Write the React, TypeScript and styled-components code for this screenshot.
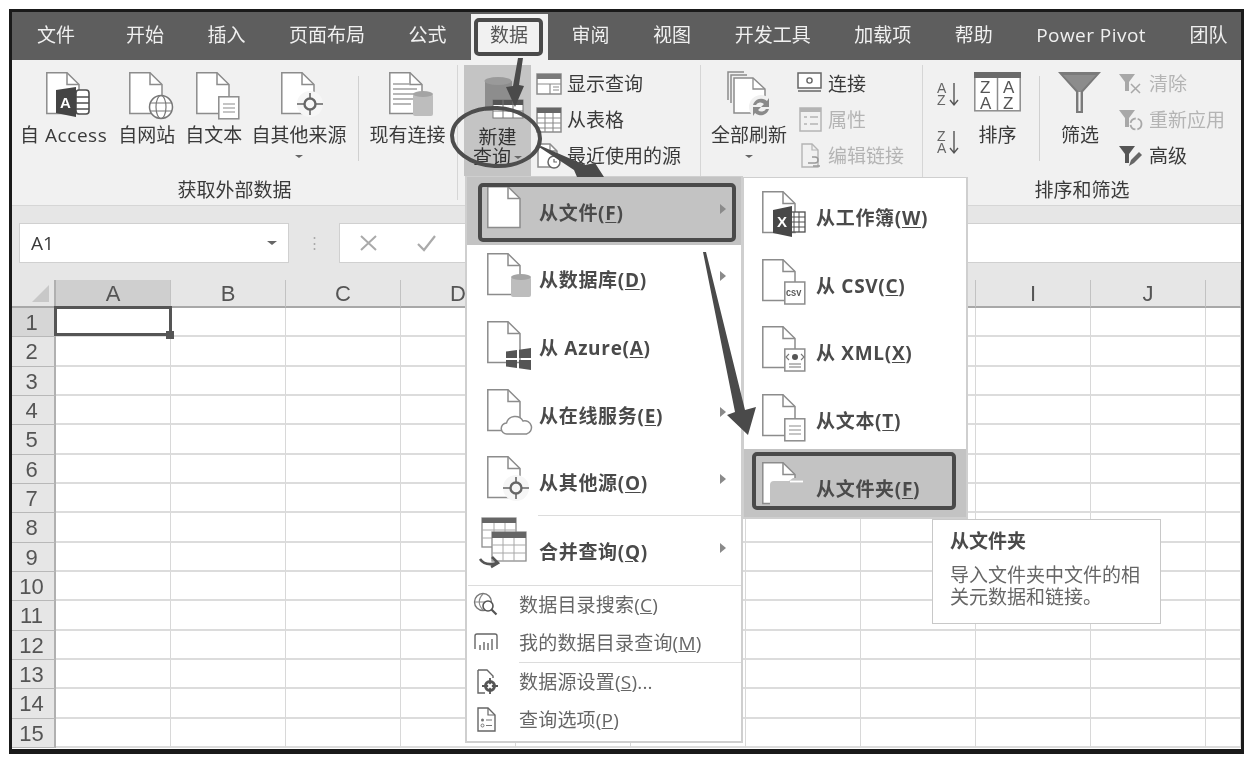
import React from "react";
import styled, { createGlobalStyle } from "styled-components";

const LINE = "#8c8c8c";
const DARK = "#4f4f4f";
const MUTED = "#b4b4b4";

const GlobalStyle = createGlobalStyle`
  html, body { margin: 0; background: #fff; }
  #root { padding: 9px; }
  svg { display: block; overflow: visible; flex-shrink: 0; }
`;

const Frame = styled.div`
  position: relative;
  width: 1229px;
  height: 737px;
  border: 3px solid #1a1a1a;
  border-bottom-width: 5px;
  overflow: hidden;
  display: flex;
  flex-direction: column;
  background: #fff;
  color: #3a3a3a;
  font: 19px/24px "Open Sans", "Noto Sans CJK SC", sans-serif;
  filter: blur(0.45px);
`;

const TabBar = styled.div`
  height: 48px;
  flex-shrink: 0;
  display: flex;
  gap: 43.5px;
  padding-left: 25px;
  background: #5e5e5e;
  color: #f0f0f0;
  white-space: nowrap;
`;

const Tab = styled.div<{ $active?: boolean; $file?: boolean; $latin?: boolean }>`
  position: relative;
  z-index: 0;
  display: flex;
  align-items: center;
  padding-bottom: 2px;
  margin-right: ${(p) => (p.$file ? 7.5 : 0)}px;
  letter-spacing: ${(p) => (p.$latin ? 0.45 : 0)}px;
  color: ${(p) => (p.$active ? "#555" : "inherit")};
  ${(p) =>
    p.$active &&
    `
    &::before {
      content: "";
      position: absolute;
      z-index: -1;
      left: -19px;
      right: -20px;
      top: 2px;
      bottom: 0;
      background: #f1f1f1;
    }
    &::after {
      content: "";
      position: absolute;
      left: -16px;
      right: -15px;
      top: 6px;
      height: 30px;
      border: 4px solid #4a4a4a;
      border-radius: 5px;
    }
  `}
`;

const Ribbon = styled.div`
  height: 145px;
  flex-shrink: 0;
  box-sizing: border-box;
  padding-top: 5px;
  display: flex;
  background: #f1f1f1;
`;

const Group = styled.div<{ $width?: number; $grow?: boolean }>`
  box-sizing: border-box;
  width: ${(p) => (p.$width ? `${p.$width}px` : "auto")};
  flex-grow: ${(p) => (p.$grow ? 1 : 0)};
  height: 135px;
  display: flex;
  flex-direction: column;
  border-right: ${(p) => (p.$grow ? "none" : "1px solid #d6d6d6")};
`;

const GroupBody = styled.div<{ $left: number }>`
  height: 115px;
  display: flex;
  padding-left: ${(p) => p.$left}px;
`;

const GroupLabel = styled.div`
  height: 20px;
  line-height: 20px;
  text-align: center;
  white-space: nowrap;
`;

const BigButton = styled.div<{ $gap?: number; $width?: number; $nudge?: number }>`
  width: ${(p) => (p.$width ? `${p.$width}px` : "auto")};
  margin-left: ${(p) => p.$gap ?? 0}px;
  padding-top: 7px;
  display: flex;
  flex-direction: column;
  align-items: center;
  white-space: nowrap;
  & > svg {
    margin-left: ${(p) => p.$nudge ?? 0}px;
  }
`;

const BigLabel = styled.div<{ $top?: number; $wide?: boolean }>`
  margin-top: ${(p) => p.$top ?? 5}px;
  letter-spacing: ${(p) => (p.$wide ? 0.55 : 0)}px;
`;

const Caret = styled.span<{ $margin?: number; $size?: number }>`
  display: block;
  margin-top: ${(p) => p.$margin ?? 8}px;
  width: 0;
  height: 0;
  border-left: ${(p) => p.$size ?? 4}px solid transparent;
  border-right: ${(p) => p.$size ?? 4}px solid transparent;
  border-top: ${(p) => (p.$size ?? 4) - 0.5}px solid #666;
`;

const InlineCaret = styled(Caret)`
  display: inline-block;
  margin: 0 0 2px 3px;
  vertical-align: middle;
`;

const Divider = styled.div<{ $gap: number }>`
  width: 1px;
  height: 85px;
  margin: 11px 10px 0 ${(p) => p.$gap}px;
  background: #d0d0d0;
`;

const NewQuery = styled.div`
  width: 67px;
  height: 111px;
  box-sizing: border-box;
  padding-top: 12px;
  background: #c4c4c4;
  display: flex;
  flex-direction: column;
  align-items: center;
  line-height: 20px;
  color: #333;
  white-space: nowrap;
`;

const NewQueryText = styled.div`
  margin-top: 9px;
  text-align: center;
`;

const SmallColumn = styled.div<{ $gap: number }>`
  margin-left: ${(p) => p.$gap}px;
  padding-top: 1px;
  display: flex;
  flex-direction: column;
`;

const SmallRow = styled.div<{ $muted?: boolean }>`
  height: 36px;
  display: flex;
  align-items: center;
  gap: 5px;
  white-space: nowrap;
  color: ${(p) => (p.$muted ? MUTED : "inherit")};
`;

const SortColumn = styled.div`
  width: 22px;
  padding-top: 17px;
  display: flex;
  flex-direction: column;
  gap: 24px;
`;

const FormulaBar = styled.div`
  height: 75px;
  flex-shrink: 0;
  box-sizing: border-box;
  padding: 17px 0 17px 7px;
  display: flex;
  background: #e6e6e6;
  border-top: 1px solid #d6d6d6;
`;

const NameBox = styled.div`
  width: 270px;
  box-sizing: border-box;
  padding: 0 11px;
  display: flex;
  align-items: center;
  justify-content: space-between;
  background: #fff;
  border: 1px solid #d0d0d0;
  font: 19px "Open Sans", sans-serif;
`;

const GripDots = styled.div`
  width: 50px;
  text-align: center;
  line-height: 38px;
  font-size: 15px;
  color: #aaa;
`;

const FormulaInput = styled.div`
  flex: 1;
  display: flex;
  gap: 37px;
  align-items: center;
  padding-left: 19px;
  background: #fff;
  border: 1px solid #d0d0d0;
  border-right: none;
`;

const Sheet = styled.div`
  flex: 1;
  min-height: 0;
  display: grid;
  grid-template-columns: 44px repeat(10, 115px) 1fr;
  grid-template-rows: 28px repeat(15, 29.33px);
  font: 22px/29px "Liberation Sans", sans-serif;
  color: #555;
`;

const HeadCell = styled.div<{ $active?: boolean }>`
  background: ${(p) => (p.$active ? "#cfcfcf" : "#e6e6e6")};
  border-right: 1px solid #c2c2c2;
  border-bottom: 2px solid #a8a8a8;
  text-align: center;
  line-height: 28px;
`;

const Corner = styled.div`
  background: #e6e6e6;
  border-bottom: 2px solid #a8a8a8;
  border-right: 2px solid #b0b0b0;
  display: flex;
  align-items: flex-end;
  justify-content: flex-end;
  padding: 0 5px 4px 0;
`;

const RowHead = styled.div<{ $active?: boolean }>`
  background: ${(p) => (p.$active ? "#d6d6d6" : "#e6e6e6")};
  border-right: 2px solid #b0b0b0;
  border-bottom: 1px solid #b8b8b8;
  padding-right: 3px;
  text-align: center;
`;

const Cell = styled.div`
  position: relative;
  border-right: 1px solid #d8d8d8;
  border-bottom: 2px solid #dcdcdc;
`;

const Selection = styled.div`
  position: absolute;
  z-index: 1;
  left: -2px;
  top: -2px;
  right: -2px;
  bottom: -1px;
  border: 3px solid #555;
  &::after {
    content: "";
    position: absolute;
    right: -5px;
    bottom: -6px;
    width: 8px;
    height: 8px;
    background: #555;
  }
`;

const Menu = styled.div`
  position: absolute;
  left: 453px;
  top: 164px;
  width: 274px;
  height: 564px;
  background: #fff;
  border: 2px solid #cfcfcf;
  border-top-width: 1px;
  display: flex;
  flex-direction: column;
`;

const Item = styled.div<{ $active?: boolean; $height?: number }>`
  position: relative;
  height: ${(p) => p.$height ?? 67.6}px;
  flex-shrink: 0;
  box-sizing: border-box;
  padding: 0 0 4px 20px;
  display: flex;
  align-items: center;
  gap: 6px;
  background: ${(p) => (p.$active ? "#c3c3c3" : "transparent")};
  white-space: nowrap;
  ${(p) =>
    p.$active &&
    `
    &::after {
      content: "";
      position: absolute;
      inset: 6px 5px 3px 11px;
      border: 4px solid #4a4a4a;
      border-radius: 5px;
    }
  `}
`;

const ItemLabel = styled.span`
  margin-top: 8px;
  font-weight: 700;
  color: #4a4a4a;
  font-size: 19px;
  letter-spacing: 0.7px;
  u {
    text-underline-offset: 2px;
  }
`;

const Chevron = styled.span`
  margin: 0 15px 0 auto;
  width: 0;
  height: 0;
  border-top: 5px solid transparent;
  border-bottom: 5px solid transparent;
  border-left: 6px solid #8a8a8a;
`;

const Rule = styled.div<{ $inset: number }>`
  height: 1px;
  flex-shrink: 0;
  margin-left: ${(p) => p.$inset}px;
  background: #dcdcdc;
`;

const PlainItem = styled.div`
  height: 38px;
  flex-shrink: 0;
  padding-left: 6px;
  display: flex;
  align-items: center;
  gap: 20px;
  color: #666;
  white-space: nowrap;
  letter-spacing: 0.2px;
`;

const SubMenu = styled.div`
  position: absolute;
  left: 730px;
  top: 165px;
  width: 222px;
  height: 339px;
  background: #fff;
  border: 2px solid #cfcfcf;
  border-top-width: 1px;
  display: flex;
  flex-direction: column;
`;

const SubItem = styled(Item)`
  height: 67.8px;
  padding: 4px 0 0 18px;
  gap: 8px;
  &::after {
    inset: 3px 10px 7px 8px;
  }
`;

const Tooltip = styled.div`
  position: absolute;
  left: 920px;
  top: 507px;
  width: 229px;
  height: 105px;
  box-sizing: border-box;
  padding: 10px 12px 0 17px;
  background: #fff;
  border: 1px solid #c8c8c8;
  color: #666;
  line-height: 22px;
`;

const TooltipTitle = styled.div`
  font-weight: 700;
  color: #4a4a4a;
  margin-bottom: 12px;
`;

const Marks = styled.svg`
  position: absolute;
  left: -12px;
  top: -12px;
  pointer-events: none;
`;

/* --- icons --- */

const Doc = ({ fill = "#fff", stroke = LINE, x = 0, y = 0 }: { fill?: string; stroke?: string; x?: number; y?: number }) => (
  <g transform={`translate(${x} ${y})`} fill={fill} stroke={stroke} strokeWidth="1.5">
    <path d="M.8.8H21L33 12.5V41.5H.8Z" />
    <path d="M21 .8V12.5H33" fill="none" />
  </g>
);

const Big = ({ children }: { children: React.ReactNode }) => (
  <svg width="46" height="46" viewBox="0 0 46 46">
    {children}
  </svg>
);

const Small = ({ children }: { children: React.ReactNode }) => (
  <svg width="26" height="26" viewBox="0 0 26 26">
    {children}
  </svg>
);

const Cylinder = ({ x, y, w, h, fill = "#bdbdbd" }: { x: number; y: number; w: number; h: number; fill?: string }) => (
  <g>
    <rect x={x} y={y + 3} width={w} height={h - 3} rx="2" fill={fill} />
    <ellipse cx={x + w / 2} cy={y + 3} rx={w / 2} ry="3" fill="#a4a4a4" />
  </g>
);

const Target = ({ cx, cy }: { cx: number; cy: number }) => (
  <g stroke="#666" fill="none">
    <circle cx={cx} cy={cy} r="5.5" strokeWidth="2.4" />
    <path d={`M${cx - 13} ${cy}h7M${cx + 6} ${cy}h7M${cx} ${cy - 11}v5M${cx} ${cy + 6}v5`} strokeWidth="1.6" />
  </g>
);

const NotePage = ({ x, y }: { x: number; y: number }) => (
  <g transform={`translate(${x} ${y})`}>
    <rect x=".8" y=".8" width="20" height="22" fill="#fff" stroke={LINE} strokeWidth="1.5" />
    <path d="M5 8h12M5 12h12M5 16h12" stroke={LINE} strokeWidth="1.2" />
  </g>
);

const AccessIcon = () => (
  <Big>
    <Doc />
    <rect x="30" y="18" width="13" height="24" rx="3" fill="#fff" stroke={DARK} strokeWidth="1.6" />
    <path d="M30 25h13M30 31h13M30 37h13" stroke={DARK} strokeWidth="1.4" />
    <path d="M10 18 30 15V45L10 41Z" fill="#444" />
    <text x="14" y="36" fontSize="15" fontWeight="700" fill="#fff" fontFamily="Liberation Sans">A</text>
  </Big>
);

const WebIcon = () => (
  <Big>
    <Doc />
    <circle cx="32" cy="35" r="11.5" fill="#fff" stroke="#777" strokeWidth="1.5" />
    <ellipse cx="32" cy="35" rx="5" ry="11.5" fill="none" stroke="#777" strokeWidth="1.2" />
    <path d="M21 31h22M21 39h22" stroke="#777" strokeWidth="1.2" />
  </Big>
);

const TextIcon = () => (
  <Big>
    <Doc />
    <NotePage x={22} y={24} />
  </Big>
);

const OtherIcon = () => (
  <Big>
    <Doc />
    <circle cx="29" cy="32" r="13" fill="#f6f6f6" stroke="none" />
    <Target cx={29} cy={32} />
  </Big>
);

const ExistingIcon = () => (
  <Big>
    <Doc />
    <path d="M4 12h16M4 17h24M4 22h24M4 27h20M4 32h18" stroke="#a0a0a0" strokeWidth="1.3" />
    <Cylinder x={24} y={19} w={20} h={25} />
  </Big>
);

const NewQueryIcon = () => (
  <svg width="56" height="41" viewBox="0 0 56 41">
    <path d="M15 4v30h27V4Z" fill="#8d8d8d" />
    <ellipse cx="28" cy="4" rx="13.5" ry="4" fill="#9a9a9a" />
    <rect x="23" y="23" width="30" height="18" fill="#fff" stroke="#777" />
    <path d="M23 23h30v5H23Z" fill="#555" />
    <path d="M33 23v18M43 23v18M23 34h30" stroke="#777" />
  </svg>
);

const ShowIcon = () => (
  <Small>
    <rect x="1" y="3" width="24" height="20" fill="#fff" stroke={LINE} strokeWidth="1.5" />
    <path d="M1 3h24v5H1Z" fill="#7a7a7a" />
    <path d="M1 13h24M14 13v10M17 16h6M17 19h6" stroke={LINE} strokeWidth="1.2" />
  </Small>
);

const TableIcon = () => (
  <Small>
    <rect x="1" y="1" width="24" height="24" fill="#fff" stroke={LINE} strokeWidth="1.5" />
    <path d="M1 1h24v5H1Z" fill="#666" />
    <path d="M1 11h24M1 16h24M1 21h24M9 6v19M17 6v19" stroke={LINE} strokeWidth="1.1" />
  </Small>
);

const RecentIcon = () => (
  <Small>
    <path d="M2 1H14L21 8V24H2Z" fill="#fff" stroke={LINE} strokeWidth="1.5" />
    <path d="M14 1V8H21" fill="none" stroke={LINE} strokeWidth="1.3" />
    <circle cx="18" cy="19" r="6" fill="#fff" stroke="#666" strokeWidth="1.5" />
    <path d="M18 16v3h3" fill="none" stroke="#666" strokeWidth="1.2" />
  </Small>
);

const RefreshIcon = () => (
  <svg width="46" height="46" viewBox="0 0 46 46">
    <path d="M0 28V0H16M3 31V3H19" fill="none" stroke={LINE} strokeWidth="1.5" />
    <path d="M6 34V6H25L37 17V41H6Z" fill="#fff" stroke={LINE} strokeWidth="1.5" />
    <path d="M25 6V17H37" fill="none" stroke={LINE} strokeWidth="1.3" />
    <circle cx="33" cy="35" r="12" fill="#f1f1f1" />
    <path d="M25 33a8.5 8.5 0 0 1 14-4l2-3v9h-8l3-3a5 5 0 0 0-8 1ZM41 37a8.5 8.5 0 0 1-14 4l-2 3v-9h8l-3 3a5 5 0 0 0 8-1Z" fill="#8a8a8a" />
  </svg>
);

const LinkIcon = () => (
  <Small>
    <rect x="1" y="2" width="23" height="15" fill="#fff" stroke="#666" strokeWidth="1.5" />
    <circle cx="12.5" cy="9.5" r="2.6" fill="none" stroke="#666" strokeWidth="1.4" />
    <path d="M1 20h23" stroke="#666" strokeWidth="1.5" />
  </Small>
);

const PropsIcon = () => (
  <Small>
    <rect x="3" y="1" width="21" height="23" fill="none" stroke={MUTED} strokeWidth="1.5" />
    <path d="M3 1h21v4H3Z" fill={MUTED} />
    <path d="M7 10h3M7 17h3M13 10h8M13 17h8" stroke={MUTED} strokeWidth="1.5" />
  </Small>
);

const EditLinkIcon = () => (
  <Small>
    <path d="M5 1H15L21 7V24H5Z" fill="none" stroke={MUTED} strokeWidth="1.4" />
    <path d="M15 1V7H21" fill="none" stroke={MUTED} strokeWidth="1.2" />
    <path d="M11 20h7a3 3 0 0 0 0-6h-3M16 23h7" fill="none" stroke="#999" strokeWidth="1.5" />
  </Small>
);

const SortGlyph = ({ top, bottom }: { top: string; bottom: string }) => (
  <svg width="22" height="24" viewBox="0 0 22 24">
    <text x="0" y="11" fontSize="14" fill="#666" fontFamily="Liberation Sans">{top}</text>
    <text x="0" y="23" fontSize="14" fill="#666" fontFamily="Liberation Sans">{bottom}</text>
    <path d="M17 1v21M13 18l4 5 4-5" fill="none" stroke="#555" strokeWidth="1.4" />
  </svg>
);

const SortBoxIcon = () => (
  <svg width="47" height="40" viewBox="0 0 47 40" fontFamily="Liberation Sans" fontSize="17" fill="#555">
    <rect x=".8" y=".8" width="45.4" height="38" fill="#fff" stroke={LINE} strokeWidth="1.5" />
    <path d="M0 0h47v6H0Z" fill="#6a6a6a" />
    <path d="M23.5 6v33" stroke={LINE} strokeWidth="1.5" />
    <text x="6" y="21">Z</text>
    <text x="6" y="37">A</text>
    <text x="29" y="21">A</text>
    <text x="29" y="37">Z</text>
  </svg>
);

const FunnelIcon = () => (
  <Big>
    <path d="M1 0H44L26 20V41H19V20Z" fill="#7a7a7a" />
    <path d="M6 3H39L24 19V39H21V19Z" fill="#8c8c8c" />
    <path d="M21.5 20V39h2V20Z" fill="#f1f1f1" />
  </Big>
);

const MiniFunnel = ({ fill }: { fill: string }) => <path d="M1 3H17L11 11V20H7V11Z" fill={fill} />;

const ClearIcon = () => (
  <Small>
    <MiniFunnel fill="#a8a8a8" />
    <path d="M13 13l9 9M22 13l-9 9" stroke="#a8a8a8" strokeWidth="1.5" />
  </Small>
);

const ReapplyIcon = () => (
  <Small>
    <MiniFunnel fill="#a8a8a8" />
    <circle cx="18" cy="17" r="5.5" fill="none" stroke="#a8a8a8" strokeWidth="1.8" strokeDasharray="7 2" />
  </Small>
);

const AdvancedIcon = () => (
  <Small>
    <MiniFunnel fill="#555" />
    <path d="M11 23l2-6 8-8 3 3-8 8Z" fill="#666" />
  </Small>
);

const SheetIcon = () => (
  <Big>
    <Doc />
  </Big>
);

const DatabaseIcon = () => (
  <Big>
    <Doc />
    <Cylinder x={24} y={21} w={20} h={23} />
  </Big>
);

const AzureIcon = () => (
  <Big>
    <Doc />
    <path d="M19 30.5 30 29V37H19ZM32 28.7 44 27V37H32ZM19 39H30V47L19 45.5ZM32 39H44V49L32 47.3Z" fill="#555" />
  </Big>
);

const CloudIcon = () => (
  <Big>
    <Doc />
    <path d="M20 45a5.5 5.5 0 0 1-.5-11A9 9 0 0 1 36 32a6.5 6.5 0 0 1 3.5 13Z" fill="#fff" stroke={LINE} strokeWidth="1.5" />
  </Big>
);

const MergeIcon = () => (
  <Big>
    <g transform="translate(-6 -8)">
      <rect x="1" y="1" width="34" height="29" fill="#fff" stroke={LINE} strokeWidth="1.3" />
      <path d="M1 1h34v5H1Z" fill="#666" />
      <path d="M1 13h34M1 21h34M13 6v24M24 6v24" stroke="#a8a8a8" />
      <rect x="11" y="15" width="34" height="29" fill="#fff" stroke={LINE} strokeWidth="1.3" />
      <path d="M11 15h34v6H11Z" fill="#666" />
      <path d="M11 28h34M11 36h34M22 21v23M33 21v23" stroke="#a8a8a8" />
      <path d="M-1 42c4 6 10 6 17 4" fill="none" stroke="#555" strokeWidth="2.6" />
      <path d="M11 40l6 6-7 4" fill="none" stroke="#555" strokeWidth="2.6" />
    </g>
  </Big>
);

const ExcelIcon = () => (
  <Big>
    <Doc />
    <rect x="28" y="21" width="15" height="20" fill="#fff" stroke={DARK} strokeWidth="1.3" />
    <path d="M32 21v20M37 21v20M28 26h15M28 31h15M28 36h15" stroke={DARK} strokeWidth="1" />
    <path d="M11 19 30 15V46L11 42Z" fill="#484848" />
    <text x="15" y="36" fontSize="15" fontWeight="700" fill="#fff" fontFamily="Liberation Sans">X</text>
  </Big>
);

const CsvIcon = () => (
  <Big>
    <Doc />
    <rect x="22.8" y="23" width="20" height="22" fill="#fff" stroke={LINE} strokeWidth="1.5" />
    <text x="24" y="37" fontSize="8.5" fontWeight="700" fill="#555" fontFamily="Liberation Mono">CSV</text>
  </Big>
);

const XmlIcon = () => (
  <Big>
    <Doc />
    <rect x="22.8" y="23" width="20" height="22" fill="#fff" stroke={LINE} strokeWidth="1.5" />
    <circle cx="33" cy="31" r="3" fill="#555" />
    <path d="M27 28l-3 3 3 3M39 28l3 3-3 3M27 38h12M27 41h12" fill="none" stroke="#777" strokeWidth="1.1" />
  </Big>
);

const FolderIcon = () => (
  <Big>
    <Doc stroke="#8c8c8c" />
    <path d="M8 43V23Q8 19 12 19H27L31 16H45V43Z" fill="#c3c3c3" />
    <path d="M28 19.5H41" stroke="#fff" strokeWidth="1.8" />
  </Big>
);

const SearchIcon = () => (
  <Small>
    <circle cx="10" cy="10" r="8.5" fill="none" stroke="#777" strokeWidth="1.4" />
    <path d="M2 10h16M10 2c-5 5-5 11 0 16" fill="none" stroke="#888" strokeWidth="1.1" />
    <circle cx="15" cy="14" r="5" fill="#fff" stroke="#555" strokeWidth="1.6" />
    <path d="M18.5 17.5l5 5" stroke="#555" strokeWidth="2.2" />
  </Small>
);

const ChartIcon = () => (
  <Small>
    <path d="M2 19V6Q2 4 4 4H22Q24 4 24 6V19" fill="none" stroke="#666" strokeWidth="1.4" />
    <path d="M7 20v-5M11 20v-8M15 20v-7M19 20v-11" stroke="#666" strokeWidth="1.4" />
  </Small>
);

const GearDocIcon = () => (
  <Small>
    <path d="M5 1H14L20 7V9M5 1V24H12" fill="none" stroke="#666" strokeWidth="1.4" />
    <circle cx="17" cy="17" r="4.5" fill="none" stroke="#555" strokeWidth="3" />
    <path d="M17 9v16M9 17h16" stroke="#555" strokeWidth="1.8" />
    <circle cx="17" cy="17" r="2" fill="#fff" />
  </Small>
);

const OptionsDocIcon = () => (
  <Small>
    <path d="M5 1H15L22 8V24H5Z" fill="none" stroke="#666" strokeWidth="1.4" />
    <path d="M15 1V8H22" fill="none" stroke="#666" strokeWidth="1.2" />
    <circle cx="9.5" cy="13" r="1.5" fill="#777" />
    <circle cx="9.5" cy="18.5" r="1.5" fill="none" stroke="#777" />
    <path d="M13 13h6M13 18.5h6" stroke="#777" strokeWidth="1.2" />
  </Small>
);

/* --- data --- */

const tabs = ["开始", "插入", "页面布局", "公式"];
const tabsAfter = ["审阅", "视图", "开发工具", "加载项", "帮助", "Power Pivot", "团队"];
// E to H sit behind the open menus
const columns = ["A", "B", "C", "D", "", "", "", "", "I", "J", ""];
const rows = Array.from({ length: 15 }, (_, i) => i + 1);

const menuItems = [
  { icon: <SheetIcon />, label: "从文件", hot: "F", arrow: true, active: true },
  { icon: <DatabaseIcon />, label: "从数据库", hot: "D", arrow: true },
  { icon: <AzureIcon />, label: "从 Azure", hot: "A" },
  { icon: <CloudIcon />, label: "从在线服务", hot: "E", arrow: true },
  { icon: <OtherIcon />, label: "从其他源", hot: "O", arrow: true },
];

const subItems = [
  { icon: <ExcelIcon />, label: "从工作簿", hot: "W" },
  { icon: <CsvIcon />, label: "从 CSV", hot: "C" },
  { icon: <XmlIcon />, label: "从 XML", hot: "X" },
  { icon: <TextIcon />, label: "从文本", hot: "T" },
  { icon: <FolderIcon />, label: "从文件夹", hot: "F", active: true },
];

const Hot = ({ label, hot }: { label: string; hot: string }) => (
  <>
    {label}(<u>{hot}</u>)
  </>
);

const App = () => {
  return (
    <>
      <GlobalStyle />
      <Frame>
        <TabBar>
          <Tab $file>文件</Tab>
          {tabs.map((t) => (
            <Tab key={t}>{t}</Tab>
          ))}
          <Tab $active>数据</Tab>
          {tabsAfter.map((t) => (
            <Tab key={t} $latin={t === "Power Pivot"}>
              {t}
            </Tab>
          ))}
        </TabBar>

        <Ribbon>
          <Group $width={446}>
            <GroupBody $left={8}>
              <BigButton $nudge={10}>
                <AccessIcon />
                <BigLabel $wide>自 Access</BigLabel>
              </BigButton>
              <BigButton $gap={11} $nudge={10}>
                <WebIcon />
                <BigLabel>自网站</BigLabel>
              </BigButton>
              <BigButton $gap={10} $nudge={10}>
                <TextIcon />
                <BigLabel>自文本</BigLabel>
              </BigButton>
              <BigButton $gap={9} $nudge={10}>
                <OtherIcon />
                <BigLabel>自其他来源</BigLabel>
                <Caret />
              </BigButton>
              <Divider $gap={12} />
              <BigButton $nudge={10}>
                <ExistingIcon />
                <BigLabel>现有连接</BigLabel>
              </BigButton>
            </GroupBody>
            <GroupLabel>获取外部数据</GroupLabel>
          </Group>

          <Group $width={243}>
            <GroupBody $left={6}>
              <NewQuery>
                <NewQueryIcon />
                <NewQueryText>
                  新建
                  <br />
                  查询
                  <InlineCaret />
                </NewQueryText>
              </NewQuery>
              <SmallColumn $gap={5}>
                <SmallRow>
                  <ShowIcon />
                  显示查询
                </SmallRow>
                <SmallRow>
                  <TableIcon />
                  从表格
                </SmallRow>
                <SmallRow>
                  <RecentIcon />
                  最近使用的源
                </SmallRow>
              </SmallColumn>
            </GroupBody>
          </Group>

          <Group $width={222}>
            <GroupBody $left={10}>
              <BigButton $nudge={4}>
                <RefreshIcon />
                <BigLabel>全部刷新</BigLabel>
                <Caret />
              </BigButton>
              <SmallColumn $gap={10}>
                <SmallRow>
                  <LinkIcon />
                  连接
                </SmallRow>
                <SmallRow $muted>
                  <PropsIcon />
                  属性
                </SmallRow>
                <SmallRow $muted>
                  <EditLinkIcon />
                  编辑链接
                </SmallRow>
              </SmallColumn>
            </GroupBody>
          </Group>

          <Group $grow>
            <GroupBody $left={14}>
              <SortColumn>
                <SortGlyph top="A" bottom="Z" />
                <SortGlyph top="Z" bottom="A" />
              </SortColumn>
              <BigButton $gap={15} $width={47}>
                <SortBoxIcon />
                <BigLabel $top={11}>排序</BigLabel>
              </BigButton>
              <Divider $gap={18} />
              <BigButton $gap={7} $width={46}>
                <FunnelIcon />
                <BigLabel>筛选</BigLabel>
              </BigButton>
              <SmallColumn $gap={15}>
                <SmallRow $muted>
                  <ClearIcon />
                  清除
                </SmallRow>
                <SmallRow $muted>
                  <ReapplyIcon />
                  重新应用
                </SmallRow>
                <SmallRow>
                  <AdvancedIcon />
                  高级
                </SmallRow>
              </SmallColumn>
            </GroupBody>
            <GroupLabel>排序和筛选</GroupLabel>
          </Group>
        </Ribbon>

        <FormulaBar>
          <NameBox>
            A1
            <Caret $margin={0} $size={5} />
          </NameBox>
          <GripDots>⋮</GripDots>
          <FormulaInput>
            <svg width="20" height="18" viewBox="0 0 20 18">
              <path d="M2 2l15 14M17 2 2 16" stroke="#aaa" strokeWidth="2" />
            </svg>
            <svg width="20" height="18" viewBox="0 0 20 18">
              <path d="M2 10l6 6L19 2" fill="none" stroke="#aaa" strokeWidth="2.2" />
            </svg>
          </FormulaInput>
        </FormulaBar>

        <Sheet>
          <Corner>
            <svg width="17" height="17" viewBox="0 0 17 17">
              <path d="M17 0V17H0Z" fill="#c8c8c8" />
            </svg>
          </Corner>
          {columns.map((c, i) => (
            <HeadCell key={i} $active={c === "A"}>
              {c}
            </HeadCell>
          ))}
          {rows.map((r) => (
            <React.Fragment key={r}>
              <RowHead $active={r === 1}>{r}</RowHead>
              {columns.map((c, i) => (
                <Cell key={i}>{r === 1 && c === "A" && <Selection />}</Cell>
              ))}
            </React.Fragment>
          ))}
        </Sheet>

        <Menu>
          {menuItems.map((m) => (
            <Item key={m.label} $active={m.active}>
              {m.icon}
              <ItemLabel>
                <Hot label={m.label} hot={m.hot} />
              </ItemLabel>
              {m.arrow && <Chevron />}
            </Item>
          ))}
          <Rule $inset={71} />
          <Item $height={69}>
            <MergeIcon />
            <ItemLabel>
              <Hot label="合并查询" hot="Q" />
            </ItemLabel>
            <Chevron />
          </Item>
          <Rule $inset={1} />
          <PlainItem>
            <SearchIcon />
            <span>
              数据目录搜索(<u>C</u>)
            </span>
          </PlainItem>
          <PlainItem>
            <ChartIcon />
            <span>
              我的数据目录查询(<u>M</u>)
            </span>
          </PlainItem>
          <Rule $inset={52} />
          <PlainItem>
            <GearDocIcon />
            <span>
              数据源设置(<u>S</u>)...
            </span>
          </PlainItem>
          <PlainItem>
            <OptionsDocIcon />
            <span>
              查询选项(<u>P</u>)
            </span>
          </PlainItem>
        </Menu>

        <SubMenu>
          {subItems.map((m) => (
            <SubItem key={m.label} $active={m.active}>
              {m.icon}
              <ItemLabel>
                <Hot label={m.label} hot={m.hot} />
              </ItemLabel>
            </SubItem>
          ))}
        </SubMenu>

        <Tooltip>
          <TooltipTitle>从文件夹</TooltipTitle>
          导入文件夹中文件的相关元数据和链接。
        </Tooltip>

        <Marks width="1253" height="762" viewBox="0 0 1253 762">
          <ellipse cx="496" cy="137" rx="44" ry="29" transform="rotate(3 496 137)" fill="none" stroke="#4d4d4d" strokeWidth="4" />
          <polygon points="518,58 523,58 519,85 524,86 515,107 506,87 513,86" fill="#4a4a4a" />
          <polygon points="539,147 541,146 585,165 595,163 604,177 577,177 574,170" fill="#4a4a4a" />
          <polygon points="703,252 706,252 745,410 756,407 748,435 727,415 735,412" fill="#4a4a4a" />
        </Marks>
      </Frame>
    </>
  );
};

export default App;
